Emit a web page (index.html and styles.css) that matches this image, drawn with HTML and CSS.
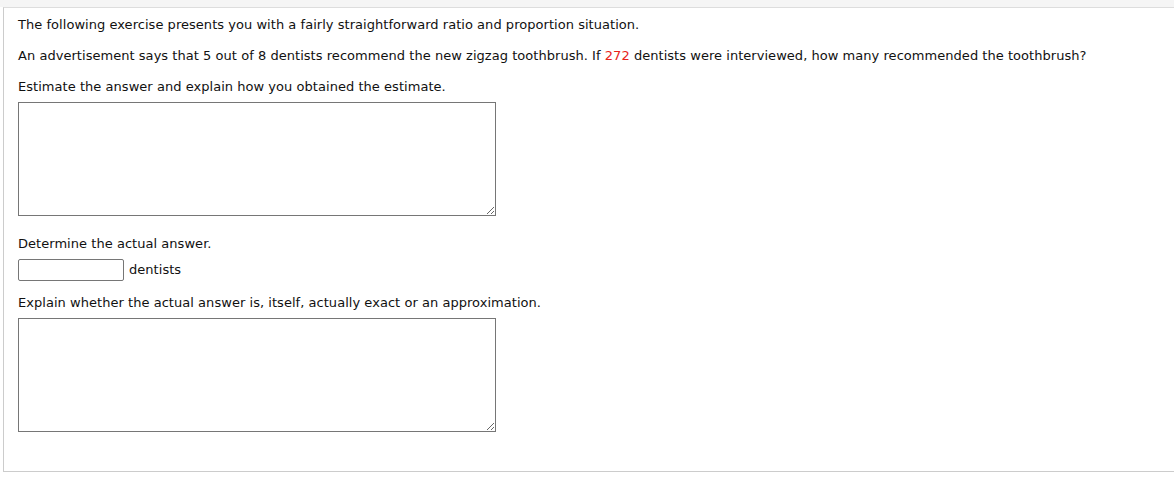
FILE: index.html
```html
<!DOCTYPE html>
<html lang="en">
  <head>
    <meta charset="utf-8" />
    <title>Ratio and proportion</title>
    <link rel="stylesheet" href="styles.css">
  </head>
  <body>
    <div class="topbar"></div>

    <!-- Question panel -->
    <div class="question">
      <p>The following exercise presents you with a fairly straightforward ratio and proportion situation.</p>
      <p>An advertisement says that 5 out of 8 dentists recommend the new zigzag toothbrush. If <span class="num">272</span> dentists were interviewed, how many recommended the toothbrush?</p>

      <p class="prompt">Estimate the answer and explain how you obtained the estimate.</p>
      <textarea class="answer-box"></textarea>

      <p class="prompt">Determine the actual answer.</p>
      <div class="answer-row">
        <input type="text" class="answer-input">
        <span class="unit">dentists</span>
      </div>

      <p class="prompt">Explain whether the actual answer is, itself, actually exact or an approximation.</p>
      <textarea class="answer-box"></textarea>
    </div>
  </body>
</html>
```
FILE: styles.css
```css
/* Page */
body {
  margin: 0;
  background: #fff;
  font-family: "DejaVu Sans", Verdana, sans-serif;
  font-size: 13px;
  letter-spacing: 0.04px;
  color: #111;
}

.topbar {
  height: 7px;
  background: #f5f5f5;
}

/* Question panel with gray border on the left, top and bottom */
.question {
  margin-left: 3px;
  border-top: 1px solid #ddd;
  border-left: 1px solid #ccc;
  border-bottom: 1px solid #ccc;
  padding: 9px 0 39px 14px;
}

.question p {
  margin: 0 0 15px;
  line-height: 16px;
}

.num {
  color: #e8231a;
}

.question .prompt {
  margin-bottom: 7px;
}

/* Answer fields */
.answer-box {
  display: block;
  box-sizing: border-box;
  width: 478px;
  height: 114px;
  margin: 0 0 20px;
  border: 1px solid #767676;
  border-radius: 0;
  padding: 2px;
  font-family: inherit;
}
.answer-box:last-child {
  margin-bottom: 0;
}

.answer-row {
  display: flex;
  align-items: center;
  gap: 5px;
  margin-bottom: 14px;
}

.answer-input {
  box-sizing: border-box;
  width: 106px;
  height: 22px;
  margin: 0;
  border: 1px solid #767676;
  border-radius: 2px;
  padding: 1px 2px;
}

.unit {
  position: relative;
  top: -1px;
}
```
